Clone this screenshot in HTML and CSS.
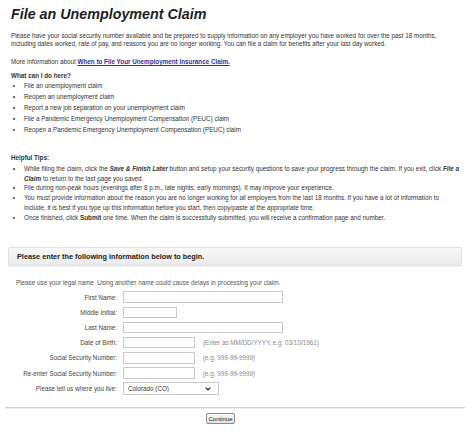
FILE: index.html
```html
<!DOCTYPE html>
<html lang="en">
<head>
<meta charset="utf-8">
<title>File an Unemployment Claim</title>
<link rel="stylesheet" href="styles.css">
</head>
<body>
<div class="page">
  <div class="content">
    <h1 class="title">File an Unemployment Claim</h1>
    <p class="intro">Please have your social security number available and be prepared to supply information on any employer you have worked for over the past 18 months, including dates worked, rate of pay, and reasons you are no longer working. You can file a claim for benefits after your last day worked.</p>
    <p class="more">More information about <a class="link" href="#">When to File Your Unemployment Insurance Claim.</a></p>
    <h2 class="subhead">What can I do here?</h2>
    <ul class="actions">
      <li>File an unemployment claim</li>
      <li>Reopen an unemployment claim</li>
      <li>Report a new job separation on your unemployment claim</li>
      <li>File a Pandemic Emergency Unemployment Compensation (PEUC) claim</li>
      <li>Reopen a Pandemic Emergency Unemployment Compensation (PEUC) claim</li>
    </ul>
    <h2 class="subhead tips-head">Helpful Tips:</h2>
    <ul class="tips">
      <li>While filing the claim, click the <b><i>Save &amp; Finish Later</i></b> button and setup your security questions to save your progress through the claim. If you exit, click <b><i>File a Claim</i></b> to return to the last page you saved.</li>
      <li>File during non-peak hours (evenings after 8 p.m., late nights, early mornings). It may improve your experience.</li>
      <li>You must provide information about the reason you are no longer working for all employers from the last 18 months. If you have a lot of information to include, it is best if you type up this information before you start, then copy/paste at the appropriate time.</li>
      <li>Once finished, click <b>Submit</b> one time. When the claim is successfully submitted, you will receive a confirmation page and number.</li>
    </ul>
    <div class="panel-head">Please enter the following information below to begin.</div>
    <p class="legal">Please use your legal name. Using another name could cause delays in processing your claim.</p>
    <form class="form">
      <div class="row">
        <label class="lbl" for="fn">First Name:</label>
        <input class="inp w-long" id="fn" type="text">
      </div>
      <div class="row">
        <label class="lbl" for="mi">Middle Initial:</label>
        <input class="inp w-short" id="mi" type="text">
      </div>
      <div class="row">
        <label class="lbl" for="ln">Last Name:</label>
        <input class="inp w-long" id="ln" type="text">
      </div>
      <div class="row">
        <label class="lbl" for="dob">Date of Birth:</label>
        <input class="inp w-mid" id="dob" type="text">
        <span class="hint">(Enter as MM/DD/YYYY, e.g. 03/10/1961)</span>
      </div>
      <div class="row">
        <label class="lbl" for="ssn">Social Security Number:</label>
        <input class="inp w-mid" id="ssn" type="text">
        <span class="hint">(e.g. 999-99-9999)</span>
      </div>
      <div class="row">
        <label class="lbl" for="ssn2">Re-enter Social Security Number:</label>
        <input class="inp w-mid" id="ssn2" type="text">
        <span class="hint">(e.g. 999-99-9999)</span>
      </div>
      <div class="row">
        <label class="lbl" for="st">Please tell us where you live:</label>
        <span class="select-wrap">
          <select class="sel" id="st">
            <option>Colorado (CO)</option>
          </select>
          <svg class="chev" viewBox="0 0 10 7" width="6" height="4" aria-hidden="true"><path d="M1 1.2 L5 5.2 L9 1.2" fill="none" stroke="#111" stroke-width="2"/></svg>
        </span>
      </div>
    </form>
  </div>
  <hr class="rule">
  <div class="actions-row">
    <button class="btn" type="button">Continue</button>
  </div>
</div>
</body>
</html>
```
FILE: styles.css
```css
html, body {
  margin: 0;
  padding: 0;
  background: #ffffff;
}
body {
  font-family: "Liberation Sans", Arial, sans-serif;
  color: #333333;
  font-size: 6.3px;
}
.page {
  padding-top: 5px;
}
.content {
  margin: 0 12px 0 8px;
}
.title {
  margin: 0;
  padding-left: 3px;
  font-size: 14.3px;
  line-height: 18px;
  font-weight: bold;
  font-style: italic;
  color: #1e1e1e;
}
.intro {
  margin: 9.3px 0 0;
  padding-left: 3px;
  line-height: 7.5px;
}
.more {
  margin: 11px 0 0;
  padding-left: 3px;
  line-height: 7.5px;
}
.link {
  color: #31319a;
  font-weight: bold;
  text-decoration: underline;
}
.subhead {
  margin: 6.5px 0 0;
  padding-left: 3px;
  font-size: 6.3px;
  line-height: 7.5px;
  font-weight: bold;
  color: #333333;
}
.actions {
  margin: 0;
  padding-left: 16px;
  line-height: 11.1px;
}
.tips-head {
  margin-top: 18.8px;
}
.tips {
  margin: 2.3px 0 0;
  padding-left: 16px;
  line-height: 9.8px;
}
.panel-head {
  margin-top: 24px;
  height: 16px;
  padding-left: 8px;
  padding-top: 1px;
  display: flex;
  align-items: center;
  box-sizing: content-box;
  border: 1px solid #e2e2e2;
  border-radius: 2px;
  background: linear-gradient(#f8f8f8, #ebebeb);
  box-shadow: 0 1px 1px rgba(0, 0, 0, 0.06);
  font-size: 7.3px;
  font-weight: bold;
  color: #222222;
}
.legal {
  margin: 13px 0 0;
  padding-left: 8px;
  line-height: 7.5px;
  color: #555555;
}
.form {
  margin-top: 5.2px;
  display: flex;
  flex-direction: column;
  gap: 3.7px;
}
.row {
  display: flex;
  align-items: center;
  gap: 6px;
}
.lbl {
  width: 109px;
  flex: none;
  text-align: right;
  color: #444444;
  white-space: nowrap;
}
.inp {
  box-sizing: border-box;
  height: 11.5px;
  margin: 0;
  padding: 0 2px;
  border: 1px solid #c9c9c9;
  border-radius: 0;
  background: #ffffff;
  font: inherit;
  flex: none;
}
.w-long { width: 160px; }
.w-short { width: 54px; }
.w-mid { width: 72px; }
.hint {
  margin-left: 2px;
  color: #8a8a8a;
  white-space: nowrap;
}
.select-wrap {
  position: relative;
  flex: none;
  width: 96px;
  height: 13px;
}
.sel {
  -webkit-appearance: none;
  appearance: none;
  box-sizing: border-box;
  width: 96px;
  height: 13px;
  margin: 0;
  padding: 0 0 0 4px;
  border: 1px solid #c9c9c9;
  border-radius: 0;
  background: #ffffff;
  font: inherit;
  color: #333333;
}
.chev {
  position: absolute;
  right: 8px;
  top: 4.5px;
}
.rule {
  margin: 12px 9px 0 5px;
  height: 0;
  border: 0;
  border-top: 1px solid #d4d4d4;
  border-bottom: 1px solid #efefef;
}
.actions-row {
  display: flex;
  padding-left: 206px;
  margin-top: 4px;
}
.btn {
  box-sizing: border-box;
  width: 29px;
  height: 11px;
  margin: 0;
  padding: 0;
  border: 1px solid #8c8c8c;
  border-radius: 2px;
  background: linear-gradient(#f6f6f6, #e2e2e2);
  font-family: "Liberation Sans", Arial, sans-serif;
  font-size: 6px;
  color: #222222;
}
```
